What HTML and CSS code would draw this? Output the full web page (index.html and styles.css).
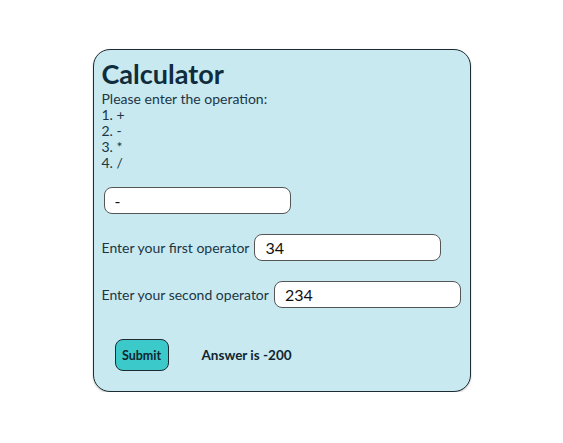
FILE: index.html
```html
<!DOCTYPE html>
<html>
<head>
<meta charset="utf-8">
<link rel="stylesheet" href="styles.css">
</head>
<body>
<div class="card">
  <h1 class="title">Calculator</h1>
  <div class="intro">
    <div>Please enter the operation:</div>
    <div>1. +</div>
    <div>2. -</div>
    <div>3. *</div>
    <div>4. /</div>
  </div>
  <input class="field op" type="text" value="-">
  <div class="row row-first">
    <span class="label">Enter your first operator</span>
    <input class="field" type="text" value="34">
  </div>
  <div class="row row-second">
    <span class="label">Enter your second operator</span>
    <input class="field" type="text" value="234">
  </div>
  <div class="actions">
    <button class="submit">Submit</button>
    <span class="answer">Answer is -200</span>
  </div>
</div>
</body>
</html>
```
FILE: styles.css
```css
html, body {
  margin: 0;
  padding: 0;
  background: #ffffff;
}
body {
  font-family: "Lato", "Noto Sans", sans-serif;
  color: #1c3645;
}
.card {
  box-sizing: border-box;
  width: 378px;
  height: 343px;
  margin: 49px auto 0;
  background: #c8e9f0;
  border: 1.5px solid #1e2b33;
  border-radius: 17px;
  padding: 8px 8px;
  box-shadow: 0 1px 2px rgba(0,0,0,0.25);
}
.title {
  margin: 0;
  font-size: 27px;
  font-weight: 700;
  line-height: 32px;
  color: #0f2d3c;
}
.intro {
  font-size: 14px;
  line-height: 16px;
  margin-top: 1px;
}
.field {
  box-sizing: border-box;
  width: 187px;
  height: 27px;
  border: 1px solid #555;
  border-radius: 8px;
  background: #fff;
  padding: 0 10px;
  font-family: "Lato", "Noto Sans", sans-serif;
  font-size: 16px;
  color: #111;
  outline: none;
}
.op {
  display: block;
  margin: 16px 0 0 2px;
}
.row {
  display: flex;
  align-items: center;
  gap: 5px;
  font-size: 14px;
}
.row-first { margin-top: 20px; }
.row-second { margin-top: 20px; }
.actions {
  display: flex;
  align-items: center;
  margin-top: 31px;
  padding-left: 13px;
}
.submit {
  box-sizing: border-box;
  width: 54px;
  height: 32px;
  background: #3cc9c9;
  border: 1.5px solid #1e2b33;
  border-radius: 8px;
  font-family: "Lato", "Noto Sans", sans-serif;
  font-size: 12.5px;
  font-weight: 700;
  color: #10252f;
  padding: 0;
}
.answer {
  margin-left: 33px;
  font-family: "Lato", "Noto Sans", sans-serif;
  font-size: 13.5px;
  font-weight: 700;
  color: #10252f;
}
```
